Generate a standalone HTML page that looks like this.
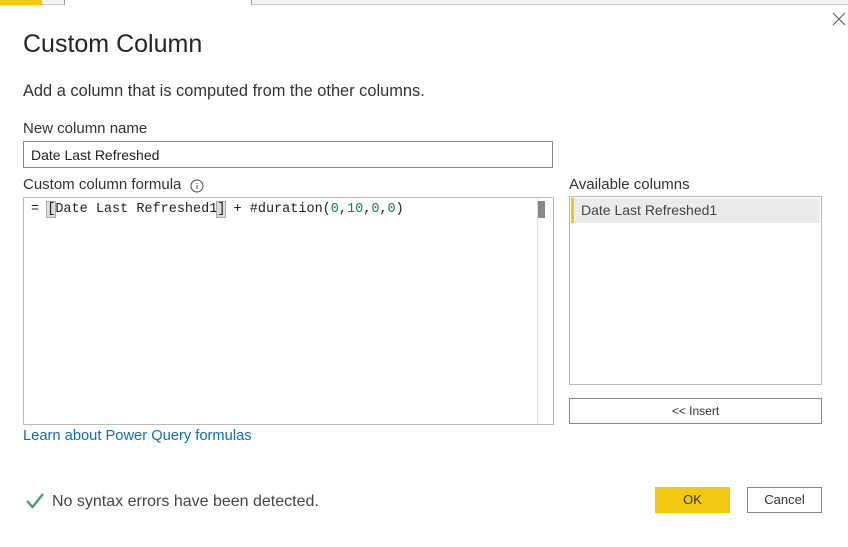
<!DOCTYPE html>
<html><head><style>
*{box-sizing:border-box;margin:0;padding:0}
body{width:848px;height:547px;background:#fff;font-family:"Liberation Sans",sans-serif;color:#333;position:relative;overflow:hidden}
.a{position:absolute}
.mono{font-family:"Liberation Mono",monospace}
</style></head><body>
<div class="a" style="left:0;top:0;width:848px;height:5px;background:#f3f3f3;border-bottom:1px solid #ccc"></div>
<div class="a" style="left:0;top:0;width:42px;height:5px;background:#f2c811"></div>
<div class="a" style="left:64px;top:0;width:188px;height:5px;border-left:1px solid #999;border-right:1px solid #999;background:#fff"></div>
<svg class="a" style="left:831px;top:11px" width="16" height="16"><path d="M2 2L14 14M14 2L2 14" stroke="#666" stroke-width="1.2"/></svg>
<div class="a" style="left:23px;top:30px;font-size:25px;color:#252423">Custom Column</div>
<div class="a" style="left:23px;top:82px;font-size:16.4px;color:#333">Add a column that is computed from the other columns.</div>
<div class="a" style="left:23px;top:120px;font-size:15px">New column name</div>
<div class="a" style="left:23px;top:141px;width:530px;height:27px;border:1px solid #888;font-size:14px;padding:5px 7px;color:#222">Date Last Refreshed</div>
<div class="a" style="left:23px;top:176px;font-size:15px">Custom column formula</div>
<svg class="a" style="left:190px;top:179px" width="14" height="14"><circle cx="7" cy="7" r="6" fill="none" stroke="#444"/><path d="M7 6v4M7 4v1" stroke="#444"/></svg>
<div class="a" style="left:23px;top:197px;width:531px;height:228px;border:1px solid #bbb"></div>
<div class="a" style="left:537px;top:198px;width:1px;height:226px;background:#ddd"></div>
<div class="a" style="left:538px;top:201px;width:7px;height:17px;background:#888"></div>
<div class="a mono" style="left:31px;top:202px;font-size:13.5px;color:#222;white-space:pre">= <span style="background:#ddd;outline:1px solid #aaa">[</span>Date Last Refreshed1<span style="background:#ddd;outline:1px solid #aaa">]</span> + #duration(<span style="color:#098658">0</span>,<span style="color:#098658">10</span>,<span style="color:#098658">0</span>,<span style="color:#098658">0</span>)</div>
<div class="a" style="left:23px;top:428px;font-size:14.7px;color:#106ebe">Learn about Power Query formulas</div>
<div class="a" style="left:569px;top:176px;font-size:15px">Available columns</div>
<div class="a" style="left:569px;top:196px;width:253px;height:189px;border:1px solid #bbb"></div>
<div class="a" style="left:571px;top:198px;width:249px;height:25px;background:#ebebeb;border-left:3px solid #f2c811;font-size:14px;padding:4px 7px;color:#444">Date Last Refreshed1</div>
<div class="a" style="left:569px;top:398px;width:253px;height:26px;border:1px solid #888;font-size:12px;text-align:center;line-height:24px;color:#333">&lt;&lt; Insert</div>
<svg class="a" style="left:25px;top:492px" width="20" height="18"><path d="M2 9L7.5 15L18 2" fill="none" stroke="#4f9a78" stroke-width="2.4"/></svg>
<div class="a" style="left:52px;top:493px;font-size:16px;color:#444">No syntax errors have been detected.</div>
<div class="a" style="left:655px;top:487px;width:75px;height:26px;background:#f2c811;font-size:13px;text-align:center;line-height:26px;color:#333">OK</div>
<div class="a" style="left:747px;top:487px;width:75px;height:26px;border:1px solid #888;font-size:13px;text-align:center;line-height:24px;color:#333">Cancel</div>
</body></html>
